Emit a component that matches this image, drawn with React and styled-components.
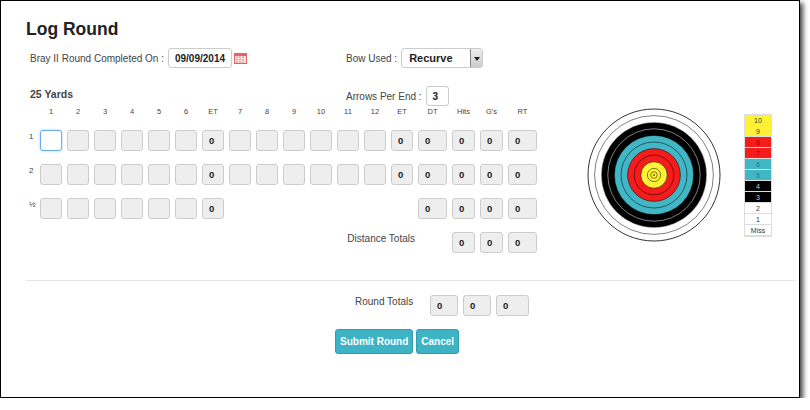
import React from "react";
import styled, { createGlobalStyle } from "styled-components";

const Global = createGlobalStyle`
  body { margin: 0; background: #fff; font-family: "Liberation Sans", Arial, sans-serif; color: #333; }
`;

const Frame = styled.div`
  box-sizing: border-box;
  width: 800px; height: 398px;
  border: 1px solid #000;
  box-shadow: 3px 3px 5px #444;
  background: #fff;
  padding: 16px 0 0 25px;
`;
const Title = styled.h1`
  margin: 0; font-size: 17.5px; font-weight: bold; color: #222; line-height: 24px;
`;
const Line = styled.div`
  display: flex; align-items: center; height: 20px; margin-top: ${p => p.$mt}px; padding-left: 4px;
`;
const Group = styled.div`
  display: flex; align-items: center; width: ${p => p.$w ? p.$w + "px" : "auto"};
`;
const Label = styled.span`
  font-size: ${p => p.$b ? "10.5px" : "10px"}; color: #444; margin-right: 4px; font-weight: ${p => p.$b ? "bold" : "normal"};
`;
const TextBox = styled.div`
  box-sizing: border-box; height: 20px; width: ${p => p.$w}px;
  border: 1px solid #ccc; border-radius: 3px; background: #fff;
  display: flex; align-items: center; padding-left: 6px;
  font-size: 10px; font-weight: bold; color: #222;
`;
const Select = styled(TextBox)`
  padding-left: 7px; justify-content: space-between; padding-right: 0; font-size: 11px;
`;
const Arrow = styled.div`
  width: 11px; height: 18px; border-left: 1px solid #888; background: linear-gradient(#eee, #ccc);
  display: flex; align-items: center; justify-content: center;
  &::after { content: ""; border: 3px solid transparent; border-top: 4px solid #222; margin-top: 4px; }
`;
const Main = styled.div`
  display: flex; margin-top: 1px;
`;
const Grid = styled.div`
  display: grid;
  grid-template-columns: 9px repeat(14, 22px) 29px 23px 23px 29px;
  grid-template-rows: 12px repeat(4, 21px);
  column-gap: 5px; row-gap: 13px;
`;
const Head = styled.div`
  font-size: 7.5px; color: #444; text-align: center; align-self: center;
`;
const RowLabel = styled.div`
  font-size: 8px; color: #444; padding-top: 2px; margin-left: 3px;
`;
const Cell = styled.div`
  box-sizing: border-box; height: 21px;
  border: 1px solid ${p => p.$focus ? "#66afe9" : "#ccc"};
  box-shadow: ${p => p.$focus ? "0 0 3px rgba(102,175,233,.6)" : "none"};
  background: ${p => p.$focus ? "#fff" : "#eee"};
  border-radius: 3px; font-size: 9.5px; font-weight: bold; color: #222;
  display: flex; align-items: center; padding-left: 6px;
  grid-column: ${p => p.$col || "auto"};
`;
const DistLabel = styled.div`
  grid-column: 2 / 17; justify-self: end; margin-right: 32px; font-size: 10px; color: #444; padding-top: 1px;
`;
const TargetArea = styled.div`
  display: flex; align-items: flex-start; margin-left: 49px; margin-top: 2px;
`;
const Legend = styled.div`
  display: flex; flex-direction: column; margin-left: 22px; margin-top: 7px;
  border: 1px solid #ddd;
`;
const Key = styled.div`
  width: 26px; height: 11px; box-sizing: border-box; border-bottom: 1px solid #ddd;
  background: ${p => p.$bg}; color: ${p => p.$fg};
  font-size: 7px; text-align: center; line-height: 11px;
`;
const Sep = styled.hr`
  border: 0; border-top: 1px solid #e6e6e6; margin: 27px 0 0 0; width: 770px;
`;
const Totals = styled.div`
  display: flex; gap: 5px; margin: 14px 0 0 329px; align-items: flex-start;
`;
const TotLabel = styled.div`
  width: 70px; font-size: 10px; color: #444; padding-top: 1px;
`;
const Buttons = styled.div`
  display: flex; gap: 3px; margin: 13px 0 0 309px;
`;
const Button = styled.button`
  height: 25px; padding: 0 4px; border: 1px solid #2e9eae; border-radius: 3px;
  background: #3db3c4; color: #fff; font-family: "Liberation Sans", Arial, sans-serif;
  font-size: 10px; font-weight: bold;
`;

const heads = ["1","2","3","4","5","6","ET","7","8","9","10","11","12","ET","DT","Hits","G's","RT"];

function Target() {
  const cx = 68, cy = 68, s = 6.6;
  const rings = [
    ["#fff", "#000"], ["#fff", "#000"], ["#000", "#fff"], ["#000", "#fff"],
    ["#41b6c4", "#000"], ["#41b6c4", "#000"], ["#f51c1c", "#000"], ["#f51c1c", "#000"],
    ["#fff234", "#000"], ["#fff234", "#000"],
  ];
  return (
    <svg width="136" height="136" viewBox="0 0 136 136">
      {rings.map(([f, st], i) => (
        <circle key={i} cx={cx} cy={cy} r={66 - i * s} fill={f} stroke={st} strokeWidth={i === 0 ? 0.8 : 0.5} />
      ))}
      <circle cx={cx} cy={cy} r={3.3} fill="none" stroke="#000" strokeWidth="0.5" />
      <circle cx={cx} cy={cy} r={0.8} fill="#000" />
    </svg>
  );
}

export default function App() {
  const rowCells = (focus) => heads.map((h, i) => {
    const v = ["ET","DT","Hits","G's","RT"].includes(h) ? "0" : "";
    return <Cell key={i} $focus={focus && i === 0}>{v}</Cell>;
  });
  return (
    <Frame>
      <Global />
      <Title>Log Round</Title>
      <Line $mt={7}>
        <Group $w={316}>
          <Label>Bray II Round Completed On :</Label>
          <TextBox $w={64}>09/09/2014</TextBox>
          <svg width="13" height="11" viewBox="0 0 13 11" style={{ marginLeft: 2 }}>
            <rect x="0.5" y="0.5" width="12" height="10" fill="#fbe3e3" stroke="#e06666" />
            <rect x="0.5" y="0.5" width="12" height="2.5" fill="#e06666" />
            {[4, 6.5, 9].map(y => [2, 5, 8].map(x => <rect key={x + "-" + y} x={x} y={y - 0.5} width="2" height="1.3" fill="#e79a9a" />))}
          </svg>
        </Group>
        <Group>
          <Label>Bow Used :</Label>
          <Select $w={82}><span>Recurve</span><Arrow /></Select>
        </Group>
      </Line>
      <Line $mt={16}>
        <Group $w={316}><Label $b>25 Yards</Label></Group>
        <Group style={{ marginTop: 4 }}>
          <Label>Arrows Per End :</Label>
          <TextBox $w={23}>3</TextBox>
        </Group>
      </Line>
      <Main>
        <Grid>
          <div />
          {heads.map((h, i) => <Head key={i}>{h}</Head>)}
          <RowLabel>1</RowLabel>
          {rowCells(true)}
          <RowLabel>2</RowLabel>
          {rowCells(false)}
          <RowLabel>½</RowLabel>
          {[0,1,2,3,4,5].map(i => <Cell key={i} />)}
          <Cell>0</Cell>
          <Cell $col="16">0</Cell>
          <Cell>0</Cell>
          <Cell>0</Cell>
          <Cell>0</Cell>
          <DistLabel>Distance Totals</DistLabel>
          <Cell $col="17">0</Cell>
          <Cell>0</Cell>
          <Cell>0</Cell>
        </Grid>
        <TargetArea>
          <Target />
          <Legend>
            <Key $bg="#fff234" $fg="#333">10</Key>
            <Key $bg="#fff234" $fg="#333">9</Key>
            <Key $bg="#f51c1c" $fg="#b00">8</Key>
            <Key $bg="#f51c1c" $fg="#b00">7</Key>
            <Key $bg="#41b6c4" $fg="#1a7b88">6</Key>
            <Key $bg="#41b6c4" $fg="#1a7b88">5</Key>
            <Key $bg="#000" $fg="#ccc">4</Key>
            <Key $bg="#000" $fg="#ccc">3</Key>
            <Key $bg="#fff" $fg="#333">2</Key>
            <Key $bg="#fff" $fg="#333">1</Key>
            <Key $bg="#fff" $fg="#333">Miss</Key>
          </Legend>
        </TargetArea>
      </Main>
      <Sep />
      <Totals>
        <TotLabel>Round Totals</TotLabel>
        <Cell style={{ width: 28 }}>0</Cell>
        <Cell style={{ width: 28 }}>0</Cell>
        <Cell style={{ width: 33 }}>0</Cell>
      </Totals>
      <Buttons>
        <Button>Submit Round</Button>
        <Button>Cancel</Button>
      </Buttons>
    </Frame>
  );
}
